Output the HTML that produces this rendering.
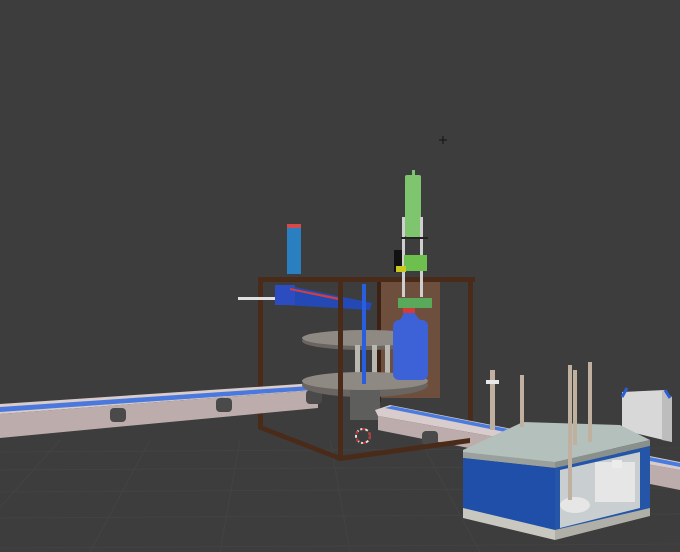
<!DOCTYPE html>
<html><head><style>
html,body{margin:0;padding:0;background:#3d3d3d;overflow:hidden}
svg{display:block}
</style></head><body>
<svg width="680" height="552" viewBox="0 0 680 552" xmlns="http://www.w3.org/2000/svg">
<rect width="680" height="552" fill="#3d3d3d"/>
<g stroke="#434343" stroke-width="1">
<line x1="0" y1="452" x2="680" y2="448"/>
<line x1="0" y1="470" x2="680" y2="466"/>
<line x1="0" y1="492" x2="680" y2="488"/>
<line x1="0" y1="518" x2="680" y2="514"/>
<line x1="0" y1="548" x2="680" y2="544"/>
<line x1="60" y1="440" x2="-40" y2="552"/>
<line x1="150" y1="440" x2="90" y2="552"/>
<line x1="240" y1="440" x2="220" y2="552"/>
<line x1="330" y1="440" x2="350" y2="552"/>
<line x1="420" y1="440" x2="480" y2="552"/>
</g>
<line x1="443" y1="136" x2="443" y2="144" stroke="#111" stroke-width="1"/>
<line x1="439" y1="140" x2="447" y2="140" stroke="#111" stroke-width="1"/>

<rect x="380" y="278" width="60" height="120" fill="#6e4f3e"/>
<rect x="258" y="277" width="217" height="5" fill="#4a2a18"/>
<rect x="258" y="280" width="5" height="148" fill="#4a2a18"/>
<rect x="468" y="280" width="5" height="162" fill="#4a2a18"/>
<rect x="377" y="282" width="4" height="120" fill="#3c2214"/>

<polygon points="0,404 315,383 318,390 0,414" fill="#d8cccc"/>
<polygon points="0,407 310,386 313,390 0,412" fill="#4a78dc"/>
<polygon points="0,414 318,390 318,408 0,438" fill="#bcacac"/>
<rect x="110" y="408" width="16" height="14" rx="4" fill="#4a4a4a"/>
<rect x="216" y="398" width="16" height="14" rx="4" fill="#4a4a4a"/>
<rect x="306" y="390" width="16" height="14" rx="4" fill="#4a4a4a"/>

<ellipse cx="365" cy="341" rx="63" ry="9" fill="#6a6560"/>
<ellipse cx="365" cy="338" rx="63" ry="8" fill="#8f8983"/>
<rect x="355" y="345" width="5" height="35" fill="#b8b8b0"/>
<rect x="372" y="345" width="5" height="35" fill="#b8b8b0"/>
<rect x="385" y="345" width="5" height="35" fill="#b8b8b0"/>
<ellipse cx="365" cy="385" rx="63" ry="12" fill="#6a6560"/>
<ellipse cx="365" cy="381" rx="63" ry="9" fill="#8f8983"/>
<rect x="350" y="390" width="30" height="30" fill="#5e5e5c"/>
<rect x="393" y="320" width="35" height="60" rx="6" fill="#3d62d8"/>
<path d="M400 320 Q405 312 404 310 L414 310 Q414 314 420 320 Z" fill="#3d62d8"/>
<rect x="403" y="307" width="12" height="6" fill="#d43a3a"/>
<rect x="405" y="175" width="16" height="62" rx="2" fill="#7fc46e"/>
<rect x="412" y="170" width="3" height="6" fill="#7fc46e"/>
<rect x="402" y="217" width="3" height="80" fill="#cfcfcf"/>
<rect x="420" y="217" width="3" height="80" fill="#cfcfcf"/>
<rect x="401" y="237" width="27" height="2" fill="#222"/>
<rect x="404" y="255" width="23" height="16" fill="#6dbf4e"/>
<rect x="394" y="250" width="8" height="22" fill="#111"/>
<rect x="396" y="266" width="10" height="6" fill="#c8c820"/>
<rect x="398" y="298" width="34" height="10" fill="#5aa85a"/>
<rect x="287" y="226" width="14" height="48" fill="#2a7fc0"/>
<rect x="287" y="224" width="14" height="4" fill="#d44a4a"/>
<rect x="238" y="297" width="50" height="3" fill="#e0e0e0"/>
<polygon points="275,290 285,285 372,303 370,310 285,305" fill="#2549b4"/>
<rect x="275" y="285" width="20" height="20" fill="#2d4cc0"/>
<polygon points="290,288 340,298 338,300 290,290" fill="#d04040"/>
<rect x="362" y="284" width="4" height="100" fill="#2a5ee0"/>

<polygon points="375,410 390,405 680,462 680,470 378,416" fill="#d8cccc"/>
<polygon points="385,408 392,406 680,463 680,467" fill="#4a7ce0"/>
<polygon points="378,416 680,470 680,490 378,430" fill="#bcacac"/>
<rect x="422" y="431" width="16" height="14" rx="4" fill="#4a4a4a"/>
<circle cx="363" cy="436" r="7" fill="none" stroke="#e0e0e0" stroke-width="2" stroke-dasharray="3 2"/>
<circle cx="363" cy="436" r="7" fill="none" stroke="#c03030" stroke-width="2" stroke-dasharray="3 5"/>

<rect x="338" y="280" width="5" height="180" fill="#4a2a18"/>
<polygon points="258,424 340,456 340,461 258,429" fill="#4a2a18"/>
<polygon points="340,456 470,438 470,443 340,461" fill="#4a2a18"/>

<polygon points="622,392 665,390 672,400 672,442 622,430" fill="#d8d8d8"/>
<polygon points="662,390 672,397 672,442 662,440" fill="#bdbdbd"/>
<path d="M622 397 L627 388 M665 390 L670 398" stroke="#2a5ed6" stroke-width="3"/>

<polygon points="463,450 523,422 620,425 650,440 555,462 463,455" fill="#b4c0bc"/>
<polygon points="463,452 555,462 555,468 463,458" fill="#9aa09c"/>
<polygon points="555,462 650,440 650,446 555,468" fill="#8a908c"/>
<polygon points="463,458 555,468 555,532 463,510" fill="#1f4fa8"/>
<polygon points="555,468 650,446 650,510 555,532" fill="#2455a6"/>
<polygon points="560,470 640,452 640,508 560,528" fill="#c9cfd0"/>
<polygon points="463,508 555,530 555,540 463,518" fill="#c8c8c0"/>
<polygon points="555,530 650,508 650,516 555,540" fill="#b0b0a8"/>
<rect x="595" y="462" width="40" height="40" fill="#e6e6e6"/>
<rect x="612" y="460" width="10" height="8" fill="#ececec"/>
<ellipse cx="575" cy="505" rx="15" ry="8" fill="#e6e6e6"/>
<rect x="490" y="370" width="5" height="60" fill="#c0b0a0"/>
<rect x="486" y="380" width="13" height="4" fill="#e8e8e8"/>
<rect x="520" y="375" width="4" height="52" fill="#c0b0a0"/>
<rect x="568" y="365" width="4" height="135" fill="#c0b0a0"/>
<rect x="573" y="370" width="4" height="75" fill="#c0b0a0"/>
<rect x="588" y="362" width="4" height="80" fill="#c0b0a0"/>
</svg>
</body></html>
